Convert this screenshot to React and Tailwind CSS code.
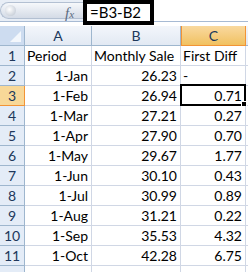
const rows = [
  ['Period', 'Monthly Sale', 'First Diff'],
  ['1-Jan', '26.23', '-'],
  ['1-Feb', '26.94', '0.71'],
  ['1-Mar', '27.21', '0.27'],
  ['1-Apr', '27.90', '0.70'],
  ['1-May', '29.67', '1.77'],
  ['1-Jun', '30.10', '0.43'],
  ['1-Jul', '30.99', '0.89'],
  ['1-Aug', '31.21', '0.22'],
  ['1-Sep', '35.53', '4.32'],
  ['1-Oct', '42.28', '6.75'],
];

const font = { fontFamily: 'Lato, "Liberation Sans", sans-serif' };

function ColHeader({ label, active }) {
  if (active) {
    return (
      <div className="h-[20px] flex items-center justify-center border border-t-0 border-[#f29436] bg-gradient-to-b from-[#f9d99f] to-[#f1c15f] text-[14px] text-[#20385b]">
        {label}
      </div>
    );
  }
  return (
    <div className="h-[20px] flex items-center justify-center border-r border-b border-[#9eb6ce] bg-gradient-to-b from-[#f3f6fb] to-[#e2e9f3] text-[14px] text-[#20385b]">
      {label}
    </div>
  );
}

function RowHeader({ n, active }) {
  return (
    <div
      className={
        active
          ? 'h-[20px] flex items-center justify-center border border-l-0 border-t-0 border-[#f29436] bg-[#f8d898] text-[14px] text-[#20385b]'
          : 'h-[20px] flex items-center justify-center border-r border-b border-[#9eb6ce] bg-[#e4ecf7] text-[14px] text-[#20385b]'
      }
    >
      {n}
    </div>
  );
}

function Cell({ children, right, selected }) {
  return (
    <div
      className={`relative h-[20px] flex items-center border-r border-b border-[#d0d7e5] bg-white text-[14px] text-black whitespace-nowrap ${
        right ? 'justify-end pr-[3px]' : 'pl-[2px]'
      }`}
    >
      {children}
      {selected && (
        <div className="absolute -left-[1px] -top-[2px] -right-[1px] -bottom-[1px] border-2 border-black">
          <div className="absolute -right-[3px] -bottom-[3px] w-[6px] h-[6px] bg-black border border-white" />
        </div>
      )}
    </div>
  );
}

export default function App() {
  return (
    <div className="relative w-[248px] h-[272px] overflow-hidden bg-white" style={font}>
      {/* formula bar */}
      <div className="h-[22px] flex border-b border-[#a7bad3] bg-white">
        <div className="w-[84px] h-full flex items-center bg-[#e8eef6]">
          <div className="relative w-full h-[17px] rounded-l-full border border-r-0 border-[#b3c0d2] bg-gradient-to-b from-[#f6f8fb] to-[#d4dbe6]">
            <div className="absolute left-[4px] top-[2px] w-[11px] h-[11px] rounded-full bg-[radial-gradient(circle_at_40%_40%,#ffffff,#b8c1cd)]" />
            <span
              className="absolute left-[64px] top-[-1px] italic text-[15px] text-[#5a6a80]"
              style={{ fontFamily: '"Liberation Serif", serif' }}
            >
              f<span className="text-[11px]">x</span>
            </span>
          </div>
        </div>
        <div className="flex-1" />
      </div>
      <div className="h-[4px] bg-white" />

      {/* annotated formula */}
      <div className="absolute left-[83px] top-0 w-[71px] h-[25px] border-[4px] border-black bg-white flex items-center pl-[3px] text-[15px] text-black">
        =B3-B2
      </div>

      {/* sheet grid */}
      <div className="grid grid-cols-[25px_67px_89px_65px_2px]">
        <div className="h-[20px] relative border-r border-b border-[#9eb6ce] bg-[#cddcf0]">
          <svg className="absolute right-[3px] bottom-[3px]" width="11" height="11" viewBox="0 0 11 11">
            <polygon points="11,0 11,11 0,11" fill="#f3f7fc" />
          </svg>
        </div>
        <ColHeader label="A" />
        <ColHeader label="B" />
        <ColHeader label="C" active />
        <div className="h-[20px] bg-gradient-to-b from-[#f3f6fb] to-[#e2e9f3] border-b border-[#9eb6ce]" />

        {rows.map((r, i) => (
          <Row key={i} n={i + 1} r={r} />
        ))}

        {/* row 12, cut off by the window edge */}
        <RowHeader n="" />
        <Cell />
        <Cell />
        <Cell />
        <div className="h-[20px] bg-white" />
      </div>
    </div>
  );
}

function Row({ n, r }) {
  const header = n === 1;
  return (
    <>
      <RowHeader n={n} active={n === 3} />
      <Cell right={!header}>{r[0]}</Cell>
      <Cell right={!header}>{r[1]}</Cell>
      <Cell right={!header && r[2] !== '-'} selected={n === 3}>
        {r[2]}
      </Cell>
      <div className="h-[20px] border-b border-[#d0d7e5] bg-white" />
    </>
  );
}
